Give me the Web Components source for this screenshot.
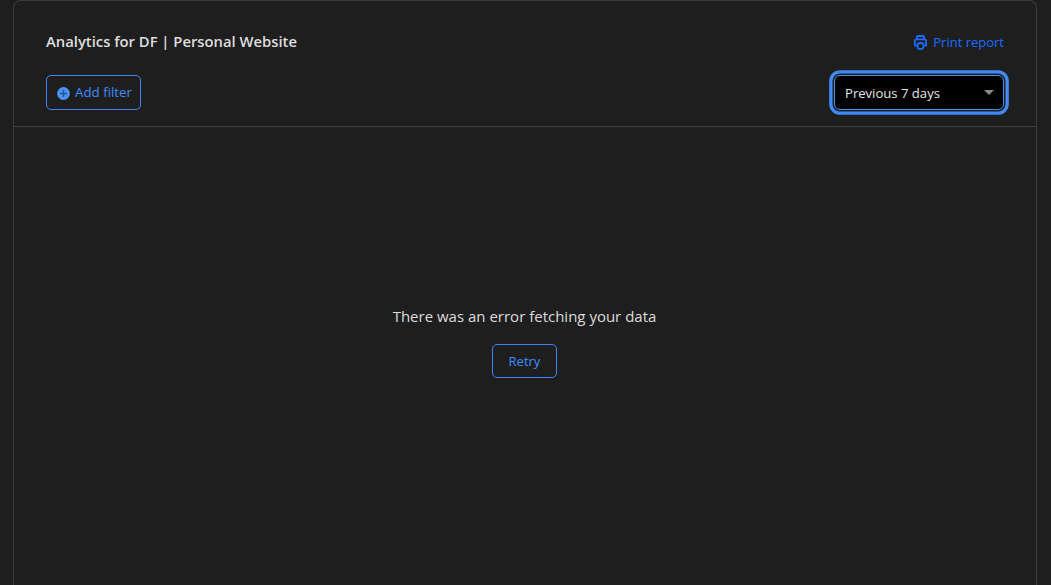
<!DOCTYPE html>
<html>
<head>
<meta charset="utf-8">
<title>Analytics</title>
<style>
html,body{margin:0;height:100%;background:#1e1e1e;overflow:hidden;}
body{font-family:"Open Sans","Noto Sans",sans-serif;color:#dcdcdc;}
</style>
</head>
<body>
<analytics-card>
  <span slot="title">Analytics for DF | Personal Website</span>
  <print-link slot="print">Print report</print-link>
  <add-filter slot="filter">Add filter</add-filter>
  <range-select slot="range">Previous 7 days</range-select>
  <error-state>There was an error fetching your data</error-state>
</analytics-card>
<script>
customElements.define('analytics-card', class extends HTMLElement {
  constructor(){
    super(); this.attachShadow({mode:'open'});
    this.shadowRoot.innerHTML = `
    <style>
    :host{display:block;box-sizing:border-box;height:600px;margin:0 14px 0 13px;border:1px solid #3a3a3a;border-bottom:0;border-radius:8px 8px 0 0;}
    header{box-sizing:border-box;height:126px;padding:27px 32px 0 32px;border-bottom:1px solid #3f3f3f;}
    .row{display:flex;justify-content:space-between;align-items:center;}
    .top{height:26px;font-size:14.8px;font-weight:600;color:#dedede;}
    .bottom{margin-top:21px;}
    main{display:block;}
    </style>
    <header>
      <div class="row top"><slot name="title"></slot><slot name="print"></slot></div>
      <div class="row bottom"><slot name="filter"></slot><slot name="range"></slot></div>
    </header>
    <main><slot></slot></main>`;
  }
});

customElements.define('print-link', class extends HTMLElement {
  constructor(){
    super(); this.attachShadow({mode:'open'});
    this.shadowRoot.innerHTML = `
    <style>
    :host{display:flex;align-items:center;gap:6px;margin-top:2px;font-size:13px;font-weight:400;color:#1a6cff;}
    svg{width:13px;height:15px;display:block;}
    </style>
    <svg viewBox="0 0 13 15" fill="none" stroke="#1a6cff" stroke-width="1.8">
      <path d="M3 4V2a1 1 0 0 1 1-1h5a1 1 0 0 1 1 1v2"/>
      <path d="M2.6 10.5H.9V5.5a1.2 1.2 0 0 1 1.2-1.2h8.8a1.2 1.2 0 0 1 1.2 1.2v5h-1.7"/>
      <rect x="3.6" y="8" width="5.8" height="6" rx="2.2"/>
    </svg>
    <span><slot></slot></span>`;
  }
});

customElements.define('add-filter', class extends HTMLElement {
  constructor(){
    super(); this.attachShadow({mode:'open'});
    this.shadowRoot.innerHTML = `
    <style>
    :host{display:flex;align-items:center;gap:5px;box-sizing:border-box;height:35px;padding:0 8px 1px 10px;border:1px solid #3d84f0;border-radius:5px;font-size:13.3px;color:#3f8cff;}
    svg{width:13px;height:13px;display:block;margin-top:2px;}
    </style>
    <svg viewBox="0 0 13 13"><circle cx="6.5" cy="6.5" r="6.4" fill="#4c93f5"/><path d="M6.5 3v7M3 6.5h7" stroke="#2a5290" stroke-width="1.5"/></svg>
    <span><slot></slot></span>`;
  }
});

customElements.define('range-select', class extends HTMLElement {
  constructor(){
    super(); this.attachShadow({mode:'open'});
    this.shadowRoot.innerHTML = `
    <style>
    :host{display:flex;align-items:center;justify-content:space-between;box-sizing:border-box;width:170px;height:35px;padding:0 9px 0 10px;background:#000;border:1px solid #4a8fee;border-radius:6px;box-shadow:0 0 0 1.5px #1e1e1e,0 0 0 4.8px #4289f5;font-size:13.1px;color:#e6e6e6;}
    i{width:0;height:0;border:5px solid transparent;border-top:5px solid #8a8a8a;border-bottom:0;display:block;}
    </style>
    <span><slot></slot></span><i></i>`;
  }
});

customElements.define('error-state', class extends HTMLElement {
  constructor(){
    super(); this.attachShadow({mode:'open'});
    this.shadowRoot.innerHTML = `
    <style>
    :host{display:flex;flex-direction:column;align-items:center;padding-top:177px;padding-right:1px;font-size:15px;color:#dcdcdc;}
    p{margin:0;line-height:24px;}
    button{margin-top:16px;box-sizing:border-box;width:65px;height:34px;background:transparent;border:1px solid #3d84f0;border-radius:5px;font:inherit;font-size:13px;color:#3f8cff;padding:0;}
    </style>
    <p><slot></slot></p>
    <button>Retry</button>`;
  }
});
</script>
</body>
</html>
